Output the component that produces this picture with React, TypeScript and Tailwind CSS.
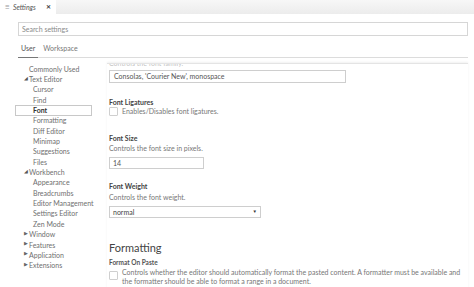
import React from "react";

const font = { fontFamily: 'Lato, "Open Sans", sans-serif' };

function NavItem({ label, level, arrow, selected }: { label: string; level: number; arrow?: "open" | "closed"; selected?: boolean }) {
  return (
    <div
      className={`h-[10.35px] flex items-center text-[7px] leading-none whitespace-nowrap ${selected ? "border border-[#c8c8c8] text-[#333] font-bold" : "border border-transparent text-[#6f6f6f]"}`}
      style={{ paddingLeft: level === 0 ? 13 : 17 }}
    >
      <span className="w-0 relative">
        {arrow === "open" && <span className="absolute left-[-5px] top-[-3px] text-[4.5px] text-[#555]">◢</span>}
        {arrow === "closed" && <span className="absolute left-[-5px] top-[-3px] text-[4.5px] text-[#666]">▶</span>}
      </span>
      <span>{label}</span>
    </div>
  );
}

function Checkbox() {
  return <div className="w-[9px] h-[9px] border border-[#cfcfcf] bg-white shrink-0 rounded-[1px]" />;
}

export default function App() {
  return (
    <div className="w-[474px] h-[287px] bg-white overflow-hidden relative" style={font}>
      {/* title bar */}
      <div className="h-[14px] flex bg-gradient-to-b from-[#f7f7f7] to-[#ececec]">
        <div className="w-[56px] h-full bg-white flex items-center pl-[5px]">
          <span className="text-[5px] text-[#999] mr-[4px] leading-none">☰</span>
          <span className="text-[7px] italic text-[#555] leading-none">Settings</span>
          <span className="ml-auto mr-[5px] text-[6px] font-bold text-[#444] leading-none">✕</span>
        </div>
      </div>

      <div className="pl-[18px] pr-[6px]">
        {/* search */}
        <div className="mt-[8px] h-[14px] border border-[#d6d6d6] flex items-center pl-[3px]">
          <span className="text-[7px] text-[#8a8a8a] leading-none">Search settings</span>
        </div>
        {/* tabs */}
        <div className="mt-[5px] h-[17px] flex items-end border-b border-[#dcdcdc] text-[7px] leading-none">
          <div className="px-[3px] pb-[5px] border-b border-[#777] mb-[-1px] text-[#555]">User</div>
          <div className="px-[3px] pb-[5px] ml-[2px] text-[#777]">Workspace</div>
        </div>
      </div>

      <div className="flex mt-[5px]">
        {/* nav */}
        <div className="w-[92px] pl-[15px] pt-[1px]">
          <NavItem label="Commonly Used" level={0} />
          <NavItem label="Text Editor" level={0} arrow="open" />
          <NavItem label="Cursor" level={1} />
          <NavItem label="Find" level={1} />
          <NavItem label="Font" level={1} selected />
          <NavItem label="Formatting" level={1} />
          <NavItem label="Diff Editor" level={1} />
          <NavItem label="Minimap" level={1} />
          <NavItem label="Suggestions" level={1} />
          <NavItem label="Files" level={1} />
          <NavItem label="Workbench" level={0} arrow="open" />
          <NavItem label="Appearance" level={1} />
          <NavItem label="Breadcrumbs" level={1} />
          <NavItem label="Editor Management" level={1} />
          <NavItem label="Settings Editor" level={1} />
          <NavItem label="Zen Mode" level={1} />
          <NavItem label="Window" level={0} arrow="closed" />
          <NavItem label="Features" level={0} arrow="closed" />
          <NavItem label="Application" level={0} arrow="closed" />
          <NavItem label="Extensions" level={0} arrow="closed" />
        </div>

        {/* content */}
        <div className="flex-1 mr-[6px] ml-[15px] relative h-[230px] overflow-hidden border-t border-[#e4e4e4] shadow-[0_-1px_2px_rgba(0,0,0,0.06)]">
          <div className="pl-[2px] text-[#999] text-[7px] leading-none absolute top-[-4px] opacity-60 whitespace-nowrap">Controls the font family.</div>
          <div className="pt-[6px] pl-[2px]">
            <div className="h-[13px] w-[237px] border border-[#cecece] flex items-center pl-[4px] text-[7px] text-[#555] leading-none">
              Consolas, 'Courier New', monospace
            </div>

            <div className="mt-[16px] text-[7px] font-bold text-[#444] leading-none">Font Ligatures</div>
            <div className="mt-[1px] flex items-center gap-[4px]">
              <Checkbox />
              <span className="text-[7px] text-[#777] leading-none">Enables/Disables font ligatures.</span>
            </div>

            <div className="mt-[19px] text-[7px] font-bold text-[#444] leading-none">Font Size</div>
            <div className="mt-[3px] text-[7px] text-[#777] leading-none">Controls the font size in pixels.</div>
            <div className="mt-[5px] h-[12px] w-[95px] border border-[#cecece] flex items-center pl-[3px] text-[7px] text-[#555] leading-none">14</div>

            <div className="mt-[14px] text-[7px] font-bold text-[#444] leading-none">Font Weight</div>
            <div className="mt-[4px] text-[7px] text-[#777] leading-none">Controls the font weight.</div>
            <div className="mt-[5px] h-[12px] w-[152px] border border-[#cecece] flex items-center pl-[3px] pr-[3px] text-[7px] text-[#444] leading-none">
              <span>normal</span>
              <span className="ml-auto text-[4.5px] text-[#333]">▼</span>
            </div>

            <div className="mt-[24px] text-[11px] text-[#444] leading-none">Formatting</div>
            <div className="mt-[7px] text-[6.5px] font-bold text-[#555] leading-none">Format On Paste</div>
            <div className="mt-[4px] flex items-start gap-[4px]">
              <Checkbox />
              <span className="text-[7px] text-[#777] leading-[9px] w-[345px] -mt-[3px]">
                Controls whether the editor should automatically format the pasted content. A formatter must be available and the formatter should be able to format a range in a document.
              </span>
            </div>
          </div>
        </div>
      </div>
    </div>
  );
}
